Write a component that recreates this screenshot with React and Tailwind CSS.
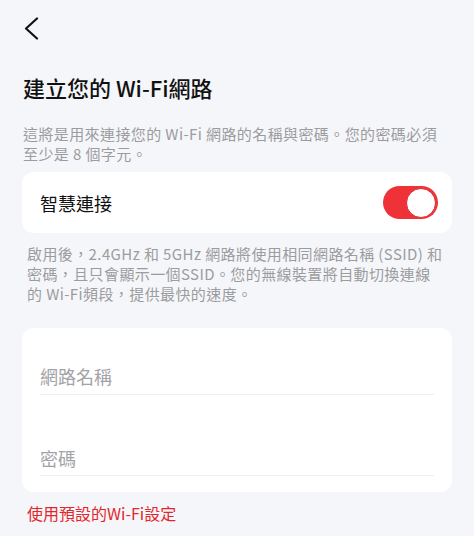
import React, { useState } from "react";

export default function App() {
  const [smart, setSmart] = useState(true);
  const [ssid, setSsid] = useState("");
  const [pwd, setPwd] = useState("");

  return (
    <div
      className="w-[474px] h-[536px] overflow-hidden bg-[#f5f6f9] text-[#111]"
      style={{ fontFamily: '"Noto Sans CJK TC", "Noto Sans", sans-serif' }}
    >
      {/* back */}
      <div className="pt-[17px] pl-[23px]">
        <button type="button" className="block">
          <svg width="16" height="23" viewBox="0 0 16 23" fill="none">
            <polyline points="14,1.5 3,11.5 14,21.5" stroke="#111" strokeWidth="2.2" strokeLinecap="round" strokeLinejoin="round" />
          </svg>
        </button>
      </div>

      <h1 className="mt-[32px] pl-[23px] text-[22px] leading-[30px] font-medium">建立您的 Wi-Fi網路</h1>

      <p className="mt-[22px] px-[23px] text-[15px] leading-[20px] tracking-[0.4px] text-[#9c9ca0]">
        這將是用來連接您的 Wi-Fi 網路的名稱與密碼。您的密碼必須<br />至少是 8 個字元。
      </p>

      {/* smart connect */}
      <div className="mt-[8px] mx-[22px] h-[61px] bg-white rounded-[12px] flex items-center justify-between pl-[18px] pr-[14px]">
        <span className="text-[18px] leading-[26px]">智慧連接</span>
        <button
          type="button"
          onClick={() => setSmart(!smart)}
          className={`w-[55px] h-[33px] rounded-full flex items-center px-[2px] ${smart ? "bg-[#ef3237] justify-end" : "bg-[#e3e3e6] justify-start"}`}
        >
          <span className="w-[30px] h-[30px] rounded-full bg-white border border-[#e5262c]" />
        </button>
      </div>

      <p className="mt-[11px] pl-[27px] pr-[20px] text-[15px] leading-[20px] tracking-[0.4px] text-[#9c9ca0]">
        啟用後，2.4GHz 和 5GHz 網路將使用相同網路名稱 (SSID) 和<br />
        密碼，且只會顯示一個SSID。您的無線裝置將自動切換連線<br />
        的 Wi-Fi頻段，提供最快的速度。
      </p>

      {/* form card */}
      <div className="mt-[24px] mx-[22px] bg-white rounded-[12px] pt-[35px] pb-[16px] pl-[18px] pr-[18px]">
        <div className="border-b border-[#eeeff2] pb-[5px]">
          <input
            value={ssid}
            onChange={e => setSsid(e.target.value)}
            placeholder="網路名稱"
            className="w-full bg-transparent outline-none text-[18px] leading-[26px] h-[26px] placeholder:text-[#a3a3a7]"
          />
        </div>
        <div className="mt-[50px] border-b border-[#eeeff2] pb-[4px]">
          <input
            type="password"
            value={pwd}
            onChange={e => setPwd(e.target.value)}
            placeholder="密碼"
            className="w-full bg-transparent outline-none text-[18px] leading-[26px] h-[26px] placeholder:text-[#a3a3a7]"
          />
        </div>
      </div>

      <button type="button" className="block mt-[11px] ml-[27px] text-[16px] leading-[20px] text-[#e3262d]">
        使用預設的Wi-Fi設定
      </button>
    </div>
  );
}
